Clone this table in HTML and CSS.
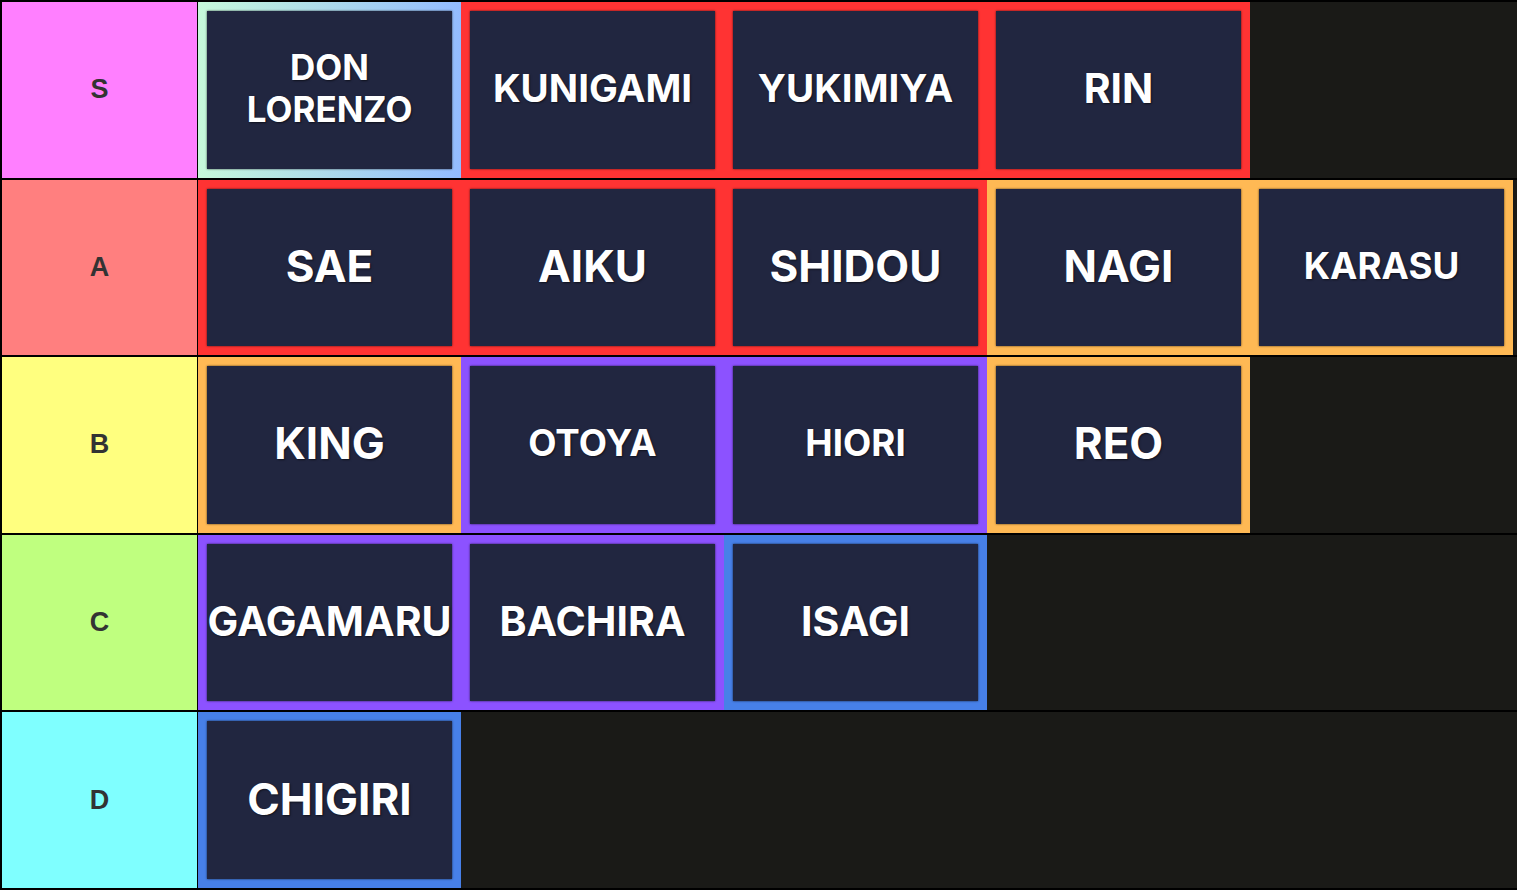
FILE: index.html
```html
<!DOCTYPE html>
<html lang="en">
<head>
<meta charset="utf-8">
<title>Tier List</title>
<link rel="stylesheet" href="styles.css">
</head>
<body>
<div class="tierlist">
  <div class="tier">
    <div class="label label-s">S</div>
    <div class="items">
      <div class="tile tile-grad"><div class="card"><span class="name fs-two">DON<br>LORENZO</span></div></div>
      <div class="tile tile-red"><div class="card"><span class="name fs-m">KUNIGAMI</span></div></div>
      <div class="tile tile-red"><div class="card"><span class="name fs-m">YUKIMIYA</span></div></div>
      <div class="tile tile-red"><div class="card"><span class="name fs-l">RIN</span></div></div>
    </div>
  </div>
  <div class="tier">
    <div class="label label-a">A</div>
    <div class="items">
      <div class="tile tile-red"><div class="card"><span class="name fs-xl">SAE</span></div></div>
      <div class="tile tile-red"><div class="card"><span class="name fs-xl">AIKU</span></div></div>
      <div class="tile tile-red"><div class="card"><span class="name fs-xl">SHIDOU</span></div></div>
      <div class="tile tile-orange"><div class="card"><span class="name fs-xl">NAGI</span></div></div>
      <div class="tile tile-orange"><div class="card"><span class="name fs-s">KARASU</span></div></div>
    </div>
  </div>
  <div class="tier">
    <div class="label label-b">B</div>
    <div class="items">
      <div class="tile tile-orange"><div class="card"><span class="name fs-xl">KING</span></div></div>
      <div class="tile tile-purple"><div class="card"><span class="name fs-s">OTOYA</span></div></div>
      <div class="tile tile-purple"><div class="card"><span class="name fs-s">HIORI</span></div></div>
      <div class="tile tile-orange"><div class="card"><span class="name fs-xl">REO</span></div></div>
    </div>
  </div>
  <div class="tier">
    <div class="label label-c">C</div>
    <div class="items">
      <div class="tile tile-purple"><div class="card"><span class="name fs-l">GAGAMARU</span></div></div>
      <div class="tile tile-purple"><div class="card"><span class="name fs-l">BACHIRA</span></div></div>
      <div class="tile tile-blue"><div class="card"><span class="name fs-l">ISAGI</span></div></div>
    </div>
  </div>
  <div class="tier">
    <div class="label label-d">D</div>
    <div class="items">
      <div class="tile tile-blue"><div class="card"><span class="name fs-xl">CHIGIRI</span></div></div>
    </div>
  </div>
</div>
</body>
</html>
```
FILE: styles.css
```css
* { box-sizing: border-box; }
html, body { margin: 0; padding: 0; }
body {
  background: #000;
  width: 1517px;
  height: 890px;
  overflow: hidden;
}
.tierlist {
  display: flex;
  flex-direction: column;
  gap: 2px;
  padding: 2px 0 2px 2px;
  height: 890px;
}
.tier {
  display: flex;
  gap: 1px;
  height: 175.6px;
  background: #000;
}
.label {
  width: 195px;
  flex: 0 0 195px;
  display: flex;
  align-items: center;
  justify-content: center;
  font-family: "Liberation Sans", Arial, sans-serif;
  font-weight: bold;
  font-size: 27px;
  color: #333;
}
.label-s { background: #ff7fff; }
.label-a { background: #ff7f7f; }
.label-b { background: #ffff7f; }
.label-c { background: #bfff7f; }
.label-d { background: #7fffff; }
.items {
  flex: 1;
  display: flex;
  background: #1a1a17;
}
.tile {
  width: 263px;
  flex: 0 0 263px;
  height: 100%;
  padding: 9px;
}
.tile-red { background: #ff3333; }
.tile-orange { background: #ffb954; }
.tile-purple { background: #8c52ff; }
.tile-blue { background: #4780e8; }
.tile-grad { background: linear-gradient(to right, #c6f9da, #93bbff); }
.card {
  width: 100%;
  height: 100%;
  background: #212640;
  box-shadow: 0 0 2px 0 rgba(0, 0, 0, 0.7);
  display: flex;
  align-items: center;
  justify-content: center;
  padding-bottom: 3px;
}
.name {
  font-family: Inter, "Noto Sans", sans-serif;
  font-weight: 700;
  color: #fff;
  text-align: center;
  white-space: nowrap;
  line-height: 1;
  text-shadow: 1px 1px 2px rgba(0, 0, 0, 0.55);
}
.fs-xl { font-size: 44px; }
.fs-l { font-size: 41px; }
.fs-m { font-size: 38.5px; }
.fs-s { font-size: 36.7px; }
.fs-two { font-size: 35px; line-height: 42.5px; }
```
